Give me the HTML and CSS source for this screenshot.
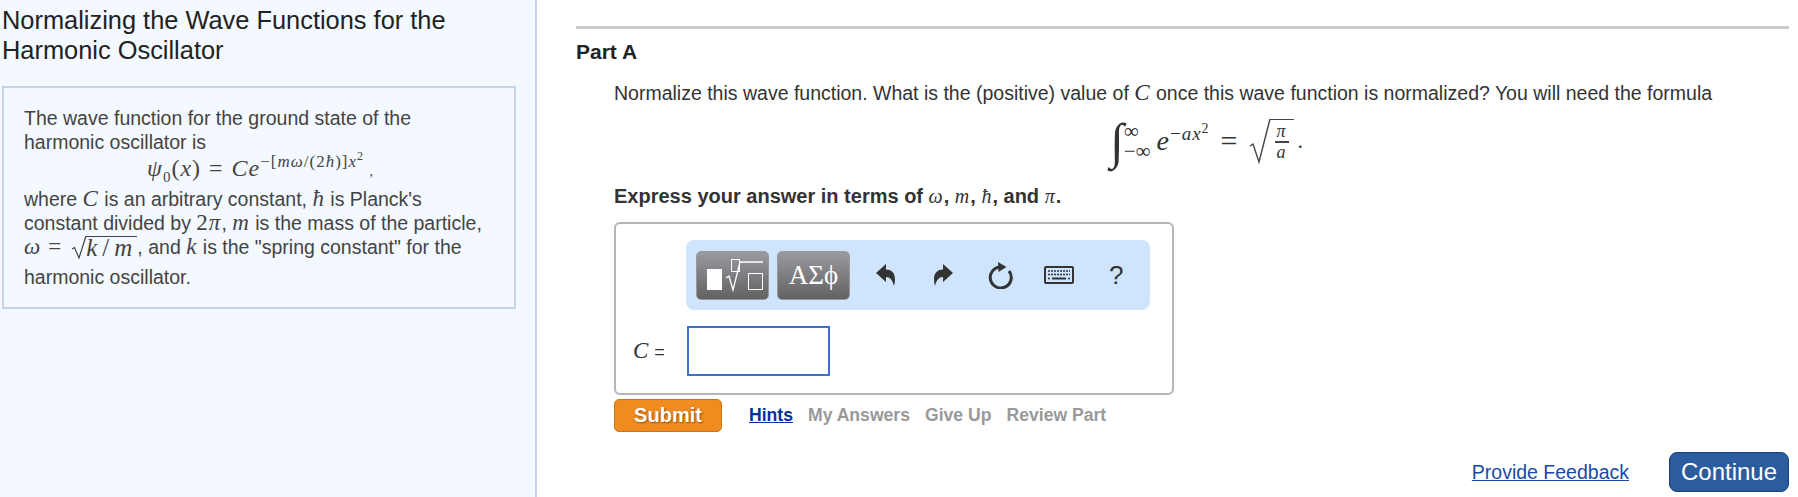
FILE: index.html
```html
<!DOCTYPE html>
<html lang="en">
<head>
    <meta charset="UTF-8">
    <meta name="viewport" content="width=device-width, initial-scale=1.0">
    <title>Normalizing the Wave Functions</title>
    <link rel="stylesheet" href="styles.css">
</head>
<body>
    <div class="page">
        <div class="sidebar">
            <h1>Normalizing the Wave Functions for the Harmonic Oscillator</h1>
            <div class="intro">
                The wave function for the ground state of the harmonic oscillator is
                <div class="intro-formula">
                    <span class="math display">ψ<sub class="up">0</sub><span class="rm">(</span>x<span class="rm">)<span class="eq">=</span></span>Ce<sup class="exp"><span class="rm">−[</span>mω<span class="rm">/(2</span>ħ<span class="rm">)]</span>x<sup class="exp2">2</sup></sup></span> <span class="comma">,</span>
                </div>
                where <span class="math">C</span> is an arbitrary constant, <span class="math">ħ</span> is Planck's constant divided by <span class="math"><span class="rm">2</span>π</span>, <span class="math">m</span> is the mass of the particle,<br>
                <span class="math omega">ω<span class="rm eq">=</span></span><span class="root"><svg class="root-sign" width="16" height="24" viewBox="0 0 16 24"><path d="M1 14 L3.5 12.500 L8 23 L15 1" fill="none" stroke="#444" stroke-width="1.2"/></svg><span class="root-body root-inline math">k<span class="rm">/</span>m</span></span>, and <span class="math">k</span> is the "spring constant" for the
                <div class="intro-last">harmonic oscillator.</div>
            </div>
        </div>

        <div class="main">
            <div class="rule"></div>
            <h2>Part A</h2>
            <div class="question">
                <p class="prompt">Normalize this wave function. What is the (positive) value of <span class="math">C</span> once this wave function is normalized? You will need the formula</p>
                <div class="formula">
                    <span class="integral">∫</span>
                    <span class="limits"><span>∞</span><span>−∞</span></span>
                    <span class="math big">e<sup class="exp-big"><span class="rm">−</span>ax<sup class="exp2">2</sup></sup></span>
                    <span class="equals">=</span>
                    <span class="root"><svg class="root-sign" width="22" height="46" viewBox="0 0 22 46"><path d="M1 28 L4 26 L10 44 L21 1" fill="none" stroke="#444" stroke-width="1.4"/></svg><span class="root-body frac math"><span class="frac-top">π</span><span>a</span></span></span>
                    <span class="dot">.</span>
                </div>
                <p class="express"><strong>Express your answer in terms of <span class="math plain">ω</span>, <span class="math plain">m</span>, <span class="math plain">ħ</span>, and <span class="math plain">π</span>.</strong></p>

                <div class="answer-box">
                    <div class="toolbar">
                        <div class="tool-btn">
                            <svg width="71" height="47" viewBox="1 1 71 47">
                                <rect x="11" y="18" width="15" height="21" fill="#fff"/>
                                <rect x="35.500" y="8.500" width="8" height="12" fill="none" stroke="#fff" stroke-width="1"/>
                                <path d="M30 27 L33 25 L37 39 L44 11 H67" fill="none" stroke="#fff" stroke-width="1.300"/>
                                <rect x="52.500" y="22.500" width="14" height="16" fill="none" stroke="#fff" stroke-width="1"/>
                            </svg>
                        </div>
                        <div class="tool-btn greek">ΑΣϕ</div>
                        <svg class="icon icon-undo" width="20" height="23" viewBox="0 0 20 23"><path d="M0 9 L10 0 V5.500 C17 5.500 21 11 18 22 C16.500 16 14 13 10 13 V18 Z" fill="#333"/></svg>
                        <svg class="icon icon-redo" width="20" height="23" viewBox="0 0 20 23"><path d="M20 9 L10 0 V5.500 C3 5.500 -1 11 2 22 C3.500 16 6 13 10 13 V18 Z" fill="#333"/></svg>
                        <svg class="icon icon-reset" width="25" height="27" viewBox="0 0 25 27"><path d="M12.500 5 A10.500 10.500 0 1 0 21 9" fill="none" stroke="#333" stroke-width="3"/><path d="M10 0 L18.500 5 L10.500 10 Z" fill="#333"/></svg>
                        <svg class="icon icon-keys" width="30" height="18" viewBox="0 0 30 18">
                            <rect x="1" y="1" width="28" height="16" rx="1" fill="none" stroke="#333" stroke-width="2"/>
                            <path d="M4 5 H26 M4 8.500 H26" stroke="#333" stroke-width="1.500" stroke-dasharray="2 1"/>
                            <path d="M4 12.500 H6 M24 12.500 H26" stroke="#333" stroke-width="1.500"/>
                            <path d="M8 12.500 H22" stroke="#333" stroke-width="2"/>
                        </svg>
                        <span class="help">?</span>
                    </div>
                    <div class="answer-row">
                        <span class="answer-label"><span class="math">C</span> =</span>
                        <input class="answer-input" type="text">
                    </div>
                </div>

                <div class="actions">
                    <button type="button" class="submit">Submit</button>
                    <a href="#" class="hints">Hints</a>
                    <span class="muted">My Answers</span>
                    <span class="muted">Give Up</span>
                    <span class="muted">Review Part</span>
                </div>
            </div>
            <div class="footer">
                <a href="#" class="feedback">Provide Feedback</a>
                <button type="button" class="continue">Continue</button>
            </div>
        </div>
    </div>
</body>
</html>
```

FILE: styles.css
```css
body {
    font-family: "Liberation Sans", Arial, sans-serif;
    margin: 0;
    padding: 0;
    background-color: #fff;
    color: #333;
    font-size: 19.500px;
}

.page {
    display: flex;
    height: 497px;
    overflow: hidden;
}

.sidebar {
    width: 537px;
    flex-shrink: 0;
    box-sizing: border-box;
    padding: 5px 20px 0 2px;
    background-color: #f4f8ff;
    border-right: 2px solid #c6d4e3;
}

.sidebar h1 {
    margin: 0;
    font-size: 25.400px;
    font-weight: normal;
    line-height: 30px;
    color: #222;
}

.intro {
    margin-top: 21px;
    width: 514px;
    box-sizing: border-box;
    padding: 18px 20px 18px 20px;
    border: 2px solid #c3d5e8;
    font-size: 19.500px;
    line-height: 24px;
    color: #444;
}

.intro-formula {
    text-align: center;
    height: 33px;
    padding: 2px 0 0 2px;
    box-sizing: border-box;
    white-space: nowrap;
}

.intro-last {
    margin-top: 6px;
}

.math {
    font-family: "Liberation Serif", "Times New Roman", serif;
    font-style: italic;
    font-size: 23px;
    letter-spacing: 1px;
}

.math .rm {
    font-style: normal;
}

.display {
    font-size: 24px;
}

.eq {
    margin: 0 8px;
}

.omega .eq {
    margin: 0 9px 0 7px;
}

.up {
    font-style: normal;
    font-size: 15px;
    line-height: 0;
}

.exp {
    font-size: 17px;
    line-height: 0;
}

.exp2 {
    font-size: 12px;
    line-height: 0;
    font-style: normal;
}

.comma {
    font-family: "Liberation Serif", serif;
    font-size: 14px;
}

.root {
    display: inline-flex;
    align-items: flex-end;
    vertical-align: bottom;
}

.root-sign {
    flex-shrink: 0;
}

.root-body {
    border-top: 1px solid #444;
    line-height: 22px;
    margin-left: -1px;
}

.root-inline {
    font-size: 25px;
    letter-spacing: 5px;
}

.main {
    flex: 1;
    min-width: 0;
    padding: 26px 9px 0 39px;
    position: relative;
}

.rule {
    height: 3px;
    background-color: #ccc;
}

.main h2 {
    margin: 11px 0 0 0;
    font-size: 21px;
    line-height: 24px;
    color: #222;
}

.question {
    padding-left: 38px;
}

.prompt {
    margin: 17px 0 0 0;
    line-height: 24px;
}

.formula {
    display: flex;
    align-items: center;
    justify-content: center;
    height: 56px;
    margin-top: 8px;
    padding-left: 10px;
    color: #333;
}

.integral {
    font-family: "Liberation Serif", serif;
    font-style: italic;
    font-size: 50px;
    line-height: 48px;
}

.limits {
    display: flex;
    flex-direction: column;
    font-family: "Liberation Serif", serif;
    font-size: 21px;
    line-height: 20px;
    margin-right: 6px;
}

.big {
    font-size: 28px;
}

.exp-big {
    font-size: 19px;
    line-height: 0;
}

.big .exp2 {
    font-size: 14px;
}

.equals {
    font-family: "Liberation Serif", serif;
    font-size: 30px;
    margin: 0 11px 0 11px;
}

.frac {
    display: flex;
    flex-direction: column;
    align-items: center;
    font-size: 18px;
    letter-spacing: 1px;
    line-height: 17px;
    padding: 3px 5px 3px 5px;
}

.frac-top {
    border-bottom: 2px solid #444;
    padding: 0 2px 1px 2px;
    margin-bottom: 1px;
}

.dot {
    font-family: "Liberation Serif", serif;
    font-size: 22px;
    margin-left: 4px;
}

.express {
    margin: 15px 0 0 0;
    font-size: 20px;
    line-height: 24px;
}

.express .math {
    font-size: 20px;
    font-weight: normal;
}

.answer-box {
    width: 560px;
    height: 173px;
    box-sizing: border-box;
    margin-top: 14px;
    padding: 16px 0 0 70px;
    border: 2px solid #b5b5b5;
    border-radius: 6px;
}

.toolbar {
    display: flex;
    align-items: center;
    width: 464px;
    height: 70px;
    box-sizing: border-box;
    padding-left: 10px;
    background-color: #cfe5fd;
    border-radius: 8px;
}

.tool-btn {
    display: flex;
    align-items: center;
    justify-content: center;
    width: 73px;
    height: 49px;
    box-sizing: border-box;
    margin-right: 8px;
    border: 1px solid #999;
    border-radius: 5px;
    background: linear-gradient(#9a99a0, #626262);
}

.greek {
    font-family: "Liberation Serif", serif;
    font-size: 27px;
    color: #fff;
}

.icon {
    flex-shrink: 0;
}

.icon-undo {
    margin-left: 18px;
}

.icon-redo {
    margin-left: 37px;
}

.icon-reset {
    margin-left: 35px;
}

.icon-keys {
    margin-left: 31px;
}

.help {
    margin-left: 35px;
    font-size: 26px;
    color: #333;
}

.answer-row {
    display: flex;
    align-items: center;
    margin-top: 16px;
    margin-left: -53px;
}

.answer-label {
    width: 54px;
    font-size: 18px;
}

.answer-input {
    width: 143px;
    height: 50px;
    box-sizing: border-box;
    border: 2px solid #3f6fd0;
    padding: 0;
    background: #fff;
}

.actions {
    display: flex;
    align-items: center;
    margin-top: 4px;
    font-size: 17.600px;
    font-weight: bold;
}

.submit {
    width: 108px;
    height: 33px;
    padding: 0;
    font-family: inherit;
    font-size: 20px;
    font-weight: bold;
    color: #fff;
    text-shadow: 1px 1px 2px #8a4a00;
    background-color: #f08c1f;
    border: 1px solid #c9741c;
    border-radius: 5px;
}

.hints {
    margin-left: 27px;
    color: #003399;
}

.muted {
    margin-left: 15px;
    color: #999;
}

.footer {
    position: absolute;
    right: 9px;
    top: 452px;
    display: flex;
    align-items: center;
    gap: 40px;
}

.feedback {
    color: #1a4aa5;
    font-size: 19.500px;
}

.continue {
    width: 120px;
    height: 40px;
    padding: 0;
    font-family: inherit;
    font-size: 24px;
    color: #fff;
    background-color: #2b5c9e;
    border: 1px solid #16417c;
    border-radius: 8px;
}
```
